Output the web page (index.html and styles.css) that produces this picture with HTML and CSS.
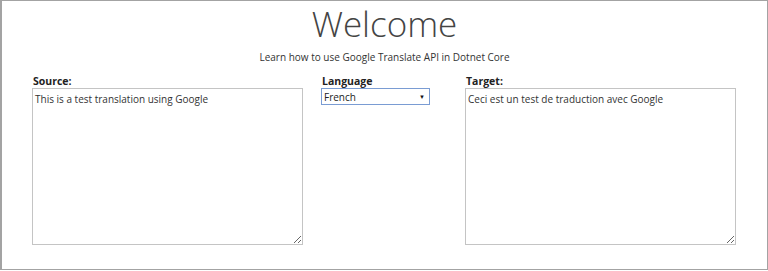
FILE: index.html
```html
<!DOCTYPE html>
<html lang="en">
<head>
    <meta charset="UTF-8">
    <title>Google Translate</title>
    <link rel="stylesheet" href="styles.css">
</head>
<body>
    <div class="frame">
        <h1>Welcome</h1>
        <p class="lead">Learn how to use Google Translate API in Dotnet Core</p>
        <div class="row">
            <div class="col col-text">
                <label for="source">Source:</label>
                <textarea id="source">This is a test translation using Google</textarea>
            </div>
            <div class="col col-lang">
                <label for="language">Language</label>
                <div class="select">
                    <span>French</span>
                    <span class="arrow">&#9660;</span>
                </div>
            </div>
            <div class="col col-text">
                <label for="target">Target:</label>
                <textarea id="target">Ceci est un test de traduction avec Google</textarea>
            </div>
        </div>
    </div>
</body>
</html>
```

FILE: styles.css
```css
html, body {
    margin: 0;
    padding: 0;
    background: #fff;
}
body {
    font-family: "Open Sans", Arial, sans-serif;
    font-size: 10px;
    color: #333;
}
.frame {
    box-sizing: border-box;
    height: 270px;
    border: 1px solid #a3a3a3;
    border-left-width: 2px;
    text-align: center;
}
h1 {
    margin: 0;
    padding-top: 1px;
    font-size: 35px;
    font-weight: 300;
    line-height: 44px;
    color: #444;
}
.lead {
    margin: 4px 0 0;
    font-size: 10px;
    line-height: 14px;
    color: #333;
}
.row {
    display: flex;
    margin: 11px 0 0 30px;
    text-align: left;
}
.col label {
    display: block;
    font-weight: bold;
    font-size: 10.5px;
    color: #222;
    line-height: 13px;
    margin-left: 1px;
}
.col-text {
    width: 271px;
}
.col-lang {
    width: 126px;
    margin: 0 18px 0 18px;
}
textarea {
    box-sizing: border-box;
    display: block;
    width: 271px;
    height: 157px;
    margin: 0;
    padding: 3px 2px;
    border: 1px solid #c4c4c4;
    font-family: inherit;
    font-size: 10px;
    color: #333;
    resize: both;
}
.select {
    box-sizing: border-box;
    display: flex;
    justify-content: space-between;
    align-items: center;
    width: 109px;
    height: 17px;
    padding: 0 4px 0 2px;
    border: 1px solid #7a9cd3;
    color: #222;
}
.arrow {
    font-size: 6px;
    color: #111;
}
```
